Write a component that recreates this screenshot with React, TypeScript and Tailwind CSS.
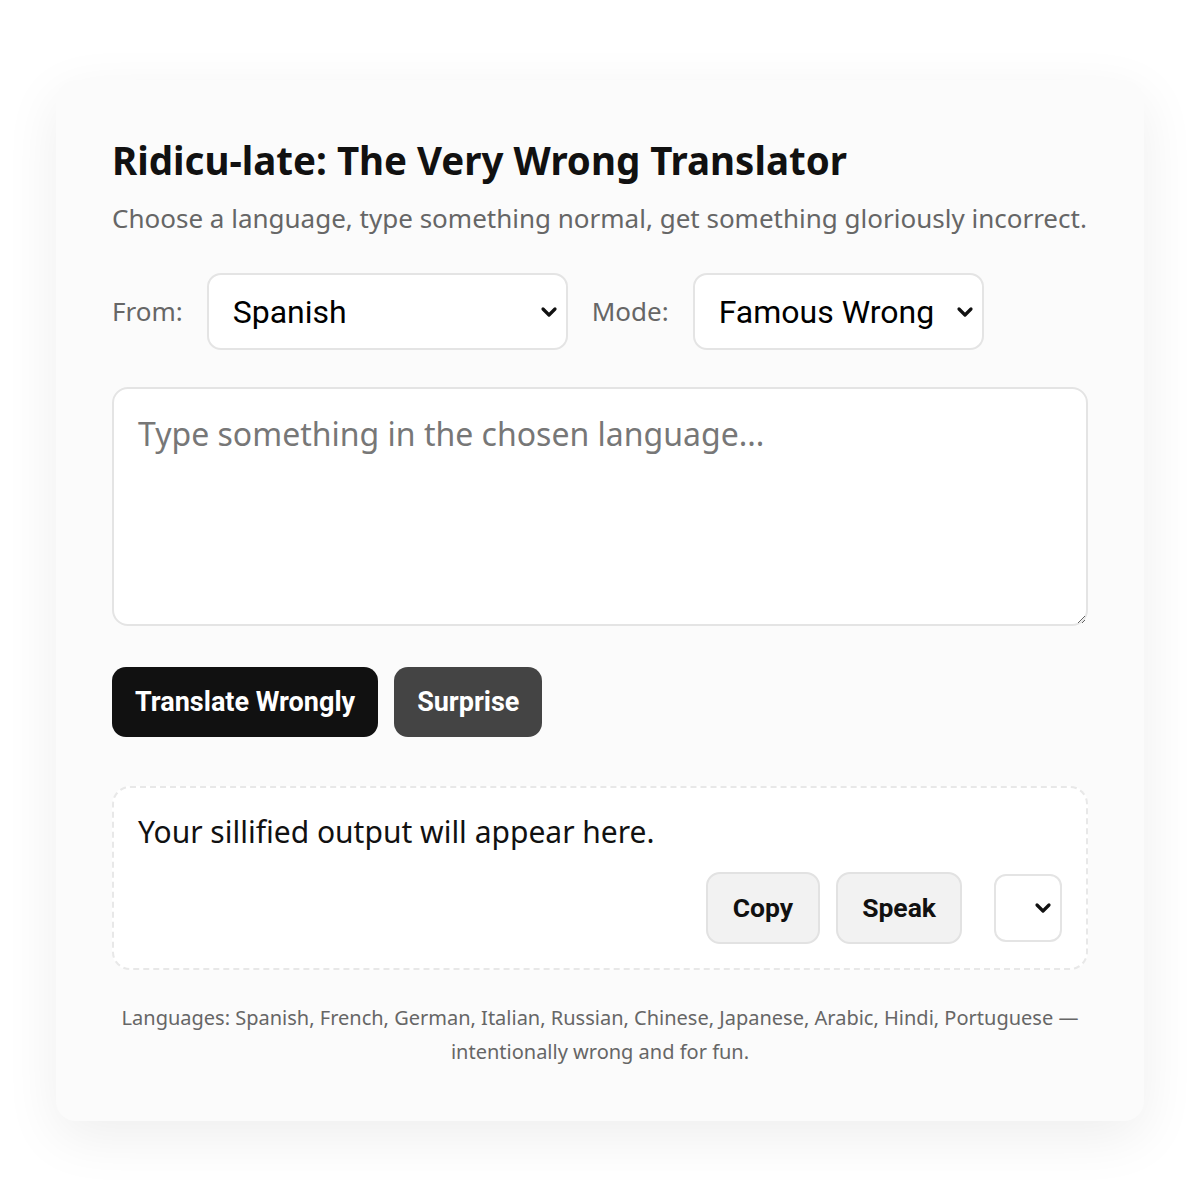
import { useState } from "react"

const Chevron = () => (
  <svg width="18" height="12" viewBox="0 0 18 12" className="pointer-events-none absolute right-[10px] top-1/2 -translate-y-1/2">
    <path d="M3 3 L9 9 L15 3" fill="none" stroke="#111" strokeWidth="3.2" strokeLinecap="round" strokeLinejoin="round" />
  </svg>
)

const App = () => {
  const [from, setFrom] = useState("Spanish")
  const [mode, setMode] = useState("Famous Wrong")
  const languages = ["Spanish", "French", "German", "Italian", "Russian", "Chinese", "Japanese", "Arabic", "Hindi", "Portuguese"]

  return (
    <div className="min-h-screen bg-white flex justify-center pt-[80px] pb-[80px] font-['Noto_Sans',sans-serif]">
      <div className="w-[1088px] bg-[#fbfbfb] rounded-[20px] shadow-[0_16px_56px_rgba(0,0,0,0.07)] px-[56px] pt-[56px] pb-[52px] flex flex-col">
        <h1 className="text-[38.5px] leading-[48px] font-bold text-[#111]">Ridicu-late: The Very Wrong Translator</h1>
        <p className="mt-[16px] text-[26px] leading-[36px] text-[#666]">
          Choose a language, type something normal, get something gloriously incorrect.
        </p>

        <div className="mt-[37px] flex items-center gap-6">
          <label className="text-[26px] text-[#666]">From:</label>
          <div className="relative">
            <select
              value={from}
              onChange={e => setFrom(e.target.value)}
              className="appearance-none w-[361px] h-[77px] rounded-[14px] border-2 border-[#e4e4e4] bg-white pl-[24px] pr-[40px] text-[32px] text-black font-['Roboto',sans-serif] outline-none"
            >
              {languages.map(l => (
                <option key={l}>{l}</option>
              ))}
            </select>
            <Chevron />
          </div>
          <label className="text-[26px] text-[#666]">Mode:</label>
          <div className="relative">
            <select
              value={mode}
              onChange={e => setMode(e.target.value)}
              className="appearance-none w-[291px] h-[77px] rounded-[14px] border-2 border-[#e4e4e4] bg-white pl-[24px] pr-[40px] text-[32px] text-black font-['Roboto',sans-serif] outline-none"
            >
              <option>Famous Wrong</option>
              <option>Literal Chaos</option>
              <option>Pure Nonsense</option>
            </select>
            <Chevron />
          </div>
        </div>

        <textarea
          placeholder="Type something in the chosen language..."
          className="mt-[37px] w-full h-[239px] rounded-[16px] border-2 border-[#e4e4e4] bg-white px-[24px] pt-[23px] pb-[20px] text-[32px] leading-[44px] text-black placeholder:text-[#777] outline-none"
        />

        <div className="mt-[41px] flex gap-4">
          <button className="h-[70px] px-[23px] rounded-[14px] bg-[#111] text-white text-[27px] font-bold font-['Roboto',sans-serif]">
            Translate Wrongly
          </button>
          <button className="h-[70px] px-[23px] rounded-[14px] bg-[#444] text-white text-[27px] font-bold font-['Roboto',sans-serif]">
            Surprise
          </button>
        </div>

        <div className="mt-[49px] rounded-[18px] border-2 border-dashed border-[#e8e8e8] bg-white px-[24px] pt-[24px] pb-[24px]">
          <p className="text-[30px] leading-[40px] text-[#111]">Your sillified output will appear here.</p>
          <div className="mt-[20px] flex items-center justify-end">
            <div className="flex gap-4">
              <button className="h-[72px] px-[25px] rounded-[14px] border-2 border-[#e2e2e2] bg-[#f2f2f2] text-[#111] text-[26.5px] font-bold font-['Roboto',sans-serif]">
                Copy
              </button>
              <button className="h-[72px] px-[24px] rounded-[14px] border-2 border-[#e2e2e2] bg-[#f2f2f2] text-[#111] text-[26.5px] font-bold font-['Roboto',sans-serif]">
                Speak
              </button>
            </div>
            <div className="relative ml-[32px]">
              <select className="appearance-none w-[68px] h-[68px] rounded-[12px] border-2 border-[#e4e4e4] bg-white text-[24px] font-['Roboto',sans-serif] outline-none" />
              <Chevron />
            </div>
          </div>
        </div>

        <p className="mt-[31px] text-center text-[20px] leading-[34px] text-[#666]">
          Languages: {languages.join(", ")} — intentionally wrong and for fun.
        </p>
      </div>
    </div>
  )
}

export default App
